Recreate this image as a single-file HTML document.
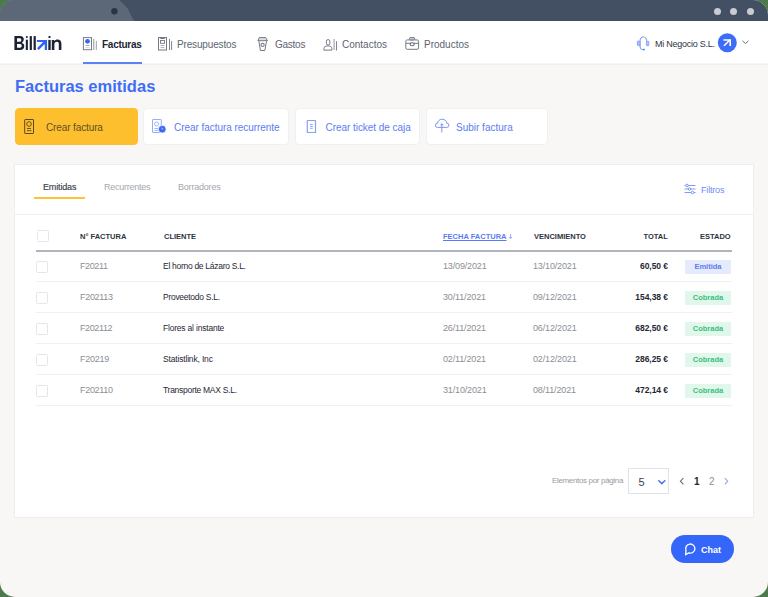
<!DOCTYPE html>
<html><head><meta charset="utf-8">
<style>
*{margin:0;padding:0;box-sizing:border-box}
html,body{width:768px;height:597px;overflow:hidden;background:#4b7a4b}
body{font-family:"Liberation Sans",sans-serif;color:#1f2735;position:relative}
.frame{position:absolute;left:0;top:0;width:768px;height:597px;border-radius:15px;overflow:hidden;background:#f8f7f5}
.abs{position:absolute;white-space:nowrap}
.topbar{position:absolute;left:0;top:0;width:768px;height:21px;background:#434f62}
.header{position:absolute;left:0;top:21px;width:768px;height:44px;background:#fff;border-bottom:1px solid #eef0f2;box-shadow:inset 0 -1px 0 #f5f6f8}
.nav{font-size:10px;color:#5d6471;line-height:12px}
.btn{position:absolute;top:108px;height:37px;background:#fff;border-radius:4px;border:1px solid #f0f0f2}
.btn span{position:absolute;top:12.5px;font-size:10px;line-height:12px;color:#5b7df4;white-space:nowrap}
.card{position:absolute;left:14px;top:164px;width:740px;height:354px;background:#fff;border:1px solid #eceef1}
.th{position:absolute;top:232px;font-size:7.5px;font-weight:bold;line-height:9px;color:#2d3440;white-space:nowrap}
.row{position:absolute;left:0;width:768px;height:31px}
.cb{position:absolute;left:36px;width:12px;height:12px;border:1px solid #e4e6e9;border-radius:1.5px;background:#fff}
.cell{position:absolute;top:11px;font-size:8.5px;line-height:10px;white-space:nowrap;color:#1f2735}
.cl{font-size:8.5px;top:11px}
.dg{font-size:9px;letter-spacing:-0.15px;top:10.5px}
.tot{right:100px;font-weight:bold;letter-spacing:-0.05px}
.gray{color:#8b8f96}
.sep{position:absolute;left:36px;top:31px;width:696px;height:1px;background:#eff0f2}
.badge{position:absolute;left:685px;top:10px;width:46px;height:14px;font-size:7.5px;line-height:14px;text-align:center;font-weight:bold}
.em{background:#e6eafd;color:#5b7cf2}
.co{background:#e2f7ec;color:#36c081}
</style></head>
<body>
<div class="frame">
  <div class="topbar"></div>
  <svg class="abs" style="left:0;top:0" width="140" height="21" viewBox="0 0 140 21"><path d="M0 0H119.2L121.3 2L123.3 4L125.4 6L127.3 8L128.5 10L129.5 12L130.4 14L131.3 16L132.3 18L133.3 19.6L134.6 21H0Z" fill="#5c6778"/><circle cx="114.4" cy="11.2" r="3.2" fill="#2a3445"/></svg>
  <div class="abs" style="left:713.5px;top:8.2px;width:7px;height:7px;border-radius:50%;background:#c9ccd1"></div>
  <div class="abs" style="left:730.2px;top:8.2px;width:7px;height:7px;border-radius:50%;background:#c9ccd1"></div>
  <div class="abs" style="left:747.2px;top:8.2px;width:7px;height:7px;border-radius:50%;background:#c9ccd1"></div>

  <div class="header"></div>
  <!-- logo -->
  <svg class="abs" style="left:0;top:0" width="70" height="60" viewBox="0 0 70 60">
    <path fill="#1c2433" fill-rule="evenodd" d="M14.4 36H20.2C22.6 36 23.8 37.3 23.8 39.2C23.8 40.6 23 41.6 21.9 42.9C23.4 43.2 24.3 44.4 24.3 46C24.3 48.4 22.8 50 20.2 50H14.4ZM17 38.3V41.8H19.9C21 41.8 21.3 41.1 21.3 40.05C21.3 39 20.9 38.3 19.9 38.3ZM17 44V47.7H20.1C21.3 47.7 21.7 47 21.7 45.85C21.7 44.7 21.2 44 20.1 44Z"/>
    <rect x="25.8" y="39.7" width="2.1" height="10.3" fill="#1c2433"/>
    <rect x="25.8" y="35.9" width="2.1" height="2.1" rx="1" fill="#1c2433"/>
    <rect x="29.7" y="36.1" width="2.2" height="13.9" fill="#1c2433"/>
    <rect x="33.6" y="36.1" width="2.2" height="13.9" fill="#1c2433"/>
    <path fill="#2f62f6" d="M36.9 39.9H47.05V50.05H44.7V43.9L38.7 49.9L37.05 48.25L43.1 42.1H36.9Z"/>
    <rect x="48.3" y="39.9" width="2.4" height="10.1" fill="#1c2433"/>
    <rect x="48.3" y="35.9" width="2.4" height="2.1" rx="1" fill="#1c2433"/>
    <path fill="#1c2433" d="M51.8 50V39.9H54.3V41.3C55 40.1 56.2 39.5 57.5 39.5C59.9 39.5 61.4 41 61.4 43.5V50H58.8V44C58.8 42.6 58.1 41.8 56.8 41.8C55.3 41.8 54.4 42.8 54.4 44.4V50Z"/>
  </svg>

  <!-- nav -->
  <div class="abs nav" style="left:102px;top:39px;font-weight:bold;color:#1f2735;letter-spacing:-0.27px">Facturas</div>
  <div class="abs" style="left:83px;top:62px;width:59px;height:2px;background:#5a82f5"></div>
  <div class="abs nav" style="left:177px;top:39px;letter-spacing:-0.15px">Presupuestos</div>
  <div class="abs nav" style="left:275px;top:39px;letter-spacing:-0.25px">Gastos</div>
  <div class="abs nav" style="left:342px;top:39px">Contactos</div>
  <div class="abs nav" style="left:424px;top:39px">Productos</div>
  <div class="abs nav" style="left:655px;top:37.5px;font-size:9px;color:#2f3642;letter-spacing:-0.25px">Mi Negocio S.L.</div>

  <!-- title -->
  <div class="abs" style="left:15px;top:77px;font-size:16.5px;font-weight:bold;line-height:19px;color:#3e6ef5">Facturas emitidas</div>

  <!-- buttons -->
  <div class="btn" style="left:15px;width:123px;background:#fdbf2d;border-color:#fdbf2d"><span style="left:30px;color:#5e5028;letter-spacing:-0.12px">Crear factura</span></div>
  <div class="btn" style="left:143px;width:146px"><span style="left:30px;letter-spacing:-0.05px">Crear factura recurrente</span></div>
  <div class="btn" style="left:295px;width:125px"><span style="left:29.5px;letter-spacing:-0.05px">Crear ticket de caja</span></div>
  <div class="btn" style="left:426px;width:122px"><span style="left:29px">Subir factura</span></div>

  <!-- card -->
  <div class="card"></div>
  <div class="abs" style="left:43px;top:181.5px;font-size:9px;line-height:10px;color:#3a404c;letter-spacing:-0.15px;-webkit-text-stroke:0.15px #3a404c">Emitidas</div>
  <div class="abs" style="left:104px;top:181.5px;font-size:9px;line-height:10px;color:#a3a7ae;letter-spacing:-0.25px">Recurrentes</div>
  <div class="abs" style="left:178px;top:181.5px;font-size:9px;line-height:10px;color:#a3a7ae;letter-spacing:-0.2px">Borradores</div>
  <div class="abs" style="left:34px;top:197px;width:51px;height:2px;background:#fbc23a"></div>
  <div class="abs" style="left:701px;top:184.5px;font-size:9px;line-height:10px;color:#6f8cf5;letter-spacing:-0.18px">Filtros</div>
  <div class="abs" style="left:15px;top:214px;width:738px;height:1px;background:#eeeff1"></div>

  <!-- table header -->
  <div class="cb" style="top:230px;left:37px"></div>
  <div class="th" style="left:80px">N° FACTURA</div>
  <div class="th" style="left:164px">CLIENTE</div>
  <div class="th" style="left:443px;color:#5a7cf3;text-decoration:underline">FECHA FACTURA</div>
  <div class="th" style="left:534px">VENCIMIENTO</div>
  <div class="th" style="left:643.5px">TOTAL</div>
  <div class="th" style="left:700px">ESTADO</div>
  <div class="abs" style="left:36px;top:250px;width:696px;height:2px;background:#b0b4bc"></div>

  <div class="row" style="top:250px">
    <div class="cb" style="top:11px"></div>
    <div class="cell gray dg" style="left:80px;letter-spacing:-0.39px">F20211</div>
    <div class="cell cl" style="left:163px;letter-spacing:-0.29px">El horno de Lázaro S.L.</div>
    <div class="cell gray dg" style="left:443px">13/09/2021</div>
    <div class="cell gray dg" style="left:533px">13/10/2021</div>
    <div class="cell tot">60,50 €</div>
    <div class="badge em">Emitida</div>
    <div class="sep"></div>
  </div>
  <div class="row" style="top:281px">
    <div class="cb" style="top:11px"></div>
    <div class="cell gray dg" style="left:80px;letter-spacing:-0.3px">F202113</div>
    <div class="cell cl" style="left:163px;letter-spacing:-0.28px">Proveetodo S.L.</div>
    <div class="cell gray dg" style="left:443px">30/11/2021</div>
    <div class="cell gray dg" style="left:533px">09/12/2021</div>
    <div class="cell tot">154,38 €</div>
    <div class="badge co">Cobrada</div>
    <div class="sep"></div>
  </div>
  <div class="row" style="top:312px">
    <div class="cb" style="top:11px"></div>
    <div class="cell gray dg" style="left:80px;letter-spacing:-0.38px">F202112</div>
    <div class="cell cl" style="left:163px;letter-spacing:-0.2px">Flores al instante</div>
    <div class="cell gray dg" style="left:443px">26/11/2021</div>
    <div class="cell gray dg" style="left:533px">06/12/2021</div>
    <div class="cell tot">682,50 €</div>
    <div class="badge co">Cobrada</div>
    <div class="sep"></div>
  </div>
  <div class="row" style="top:343px">
    <div class="cb" style="top:11px"></div>
    <div class="cell gray dg" style="left:80px;letter-spacing:-0.25px">F20219</div>
    <div class="cell cl" style="left:163px;letter-spacing:-0.17px">Statistlink, Inc</div>
    <div class="cell gray dg" style="left:443px">02/11/2021</div>
    <div class="cell gray dg" style="left:533px">02/12/2021</div>
    <div class="cell tot">286,25 €</div>
    <div class="badge co">Cobrada</div>
    <div class="sep"></div>
  </div>
  <div class="row" style="top:374px">
    <div class="cb" style="top:11px"></div>
    <div class="cell gray dg" style="left:80px;letter-spacing:-0.3px">F202110</div>
    <div class="cell cl" style="left:163px;letter-spacing:-0.28px">Transporte MAX S.L.</div>
    <div class="cell gray dg" style="left:443px">31/10/2021</div>
    <div class="cell gray dg" style="left:533px">08/11/2021</div>
    <div class="cell tot">472,14 €</div>
    <div class="badge co">Cobrada</div>
    <div class="sep"></div>
  </div>

  <!-- pagination -->
  <div class="abs" style="left:552px;top:475.5px;font-size:8px;line-height:10px;color:#979ba2;letter-spacing:-0.34px">Elementos por página</div>
  <div class="abs" style="left:628px;top:468px;width:41px;height:26px;border:1px solid #e0e2e6;background:#fff"></div>
  <div class="abs" style="left:638.5px;top:475.5px;font-size:11px;line-height:13px;color:#3a414e">5</div>
  <div class="abs" style="left:694px;top:476px;font-size:10px;line-height:11px;font-weight:bold;color:#1f2735">1</div>
  <div class="abs" style="left:709px;top:476px;font-size:10px;line-height:11px;color:#8b8f96">2</div>

  <!-- chat -->
  <div class="abs" style="left:671px;top:535px;width:63px;height:28px;border-radius:14px;background:#3566fa"></div>
  <div class="abs" style="left:701px;top:545px;font-size:9px;line-height:11px;font-weight:bold;color:#fff">Chat</div>

  <!-- icons overlay -->
  <svg class="abs" style="left:0;top:0" width="768" height="597" viewBox="0 0 768 597" fill="none">
    <!-- logo arrow -->
    <!-- facturas nav icon -->
    <rect x="83.4" y="37.6" width="8.1" height="12.1" stroke="#767d89" stroke-width="1"/>
    <circle cx="87.5" cy="41.3" r="2.4" fill="#3568f5"/>
    <path d="M85.5 45.5H89.5" stroke="#8a909a" stroke-width="0.8"/>
    <path d="M85.5 47.7H89.5" stroke="#c4c8ce" stroke-width="0.8"/>
    <path d="M93.7 39V50" stroke="#a9aeb6" stroke-width="1.3"/>
    <path d="M96.3 41V50" stroke="#9aa0a9" stroke-width="1"/>
    <!-- presupuestos -->
    <rect x="158.5" y="37.5" width="8" height="12.5" stroke="#727985" stroke-width="1"/>
    <path d="M160.5 37V38.5H164.5V37" stroke="#727985" stroke-width="1"/>
    <rect x="160.5" y="40.5" width="4" height="2.8" stroke="#727985" stroke-width="0.9"/>
    <path d="M160.5 45.5H164.5M160.5 47.6H164.5" stroke="#9aa0aa" stroke-width="0.8"/>
    <path d="M169.5 39V50M171.6 41V50" stroke="#7f8692" stroke-width="1"/>
    <!-- gastos cup -->
    <path d="M259.3 37.6H265.6L267.6 40.7H257.8Z" fill="#dcdfe3" stroke="#727985" stroke-width="1"/>
    <path d="M258.9 41.2L260.4 50.5H264.8L266.5 41.2" stroke="#727985" stroke-width="1"/>
    <circle cx="262.6" cy="44.9" r="1.6" stroke="#727985" stroke-width="1.1"/>
    <!-- contactos -->
    <rect x="326.4" y="39.6" width="3.5" height="5.4" rx="1.7" stroke="#727985" stroke-width="1"/>
    <path d="M323.9 50.1V48.4C323.9 46.9 325.5 45.9 327.9 45.9S331.9 46.9 331.9 48.4V50.1Z" stroke="#727985" stroke-width="1"/>
    <path d="M334.1 39V50" stroke="#a9aeb6" stroke-width="1.3"/>
    <path d="M336.5 41.2V50.5" stroke="#7f8692" stroke-width="1"/>
    <!-- productos -->
    <rect x="405.8" y="39.9" width="12.8" height="9.4" rx="1.5" stroke="#727985" stroke-width="1"/>
    <rect x="409.6" y="37.6" width="5" height="2.3" rx="0.6" fill="#d3d6db" stroke="#727985" stroke-width="1"/>
    <path d="M406 43.3H418.5" stroke="#727985" stroke-width="1"/>
    <ellipse cx="412.2" cy="44.2" rx="2.1" ry="1.5" fill="#fff" stroke="#666d79" stroke-width="1.1"/>
    <!-- headset -->
    <path d="M646.5 41.5V40.6C646.5 38.4 645.1 36.9 643.3 36.9C641.5 36.9 640.1 38.4 640.1 40.6V47C640.1 48.6 641.2 49.6 642.8 49.6H644.2" stroke="#6f8ff6" stroke-width="1"/>
    <rect x="637.4" y="41" width="2.4" height="4.5" rx="0.6" fill="#b3c3fa" stroke="#7a97f7" stroke-width="0.8"/>
    <rect x="646.4" y="41.2" width="2.4" height="4.5" rx="0.6" fill="#b3c3fa" stroke="#7a97f7" stroke-width="0.8"/>
    <ellipse cx="643.8" cy="49.6" rx="1.3" ry="0.8" fill="#5d82f6"/>
    <!-- arrow circle -->
    <circle cx="727.3" cy="42.8" r="9.5" fill="#3d6cf6"/>
    <g stroke="#fff" stroke-width="1.6"><path d="M723.4 40H730.2V46"/><path d="M724 45.8L729.6 40.3"/></g>
    <path d="M742.5 40.8L745.5 43.6L748.5 40.8" stroke="#6a707b" stroke-width="1"/>
    <!-- btn icons -->
    <rect x="24.7" y="119.5" width="8.8" height="14" rx="0.5" stroke="#5a4a1c" stroke-width="1"/>
    <circle cx="29" cy="124" r="2.3" stroke="#5a4a1c" stroke-width="0.9"/>
    <path d="M27 128.5H31M27 130.7H31.5" stroke="#5a4a1c" stroke-width="0.9"/>

    <rect x="152.5" y="119.5" width="8.8" height="13" rx="0.5" stroke="#97adf8" stroke-width="1"/>
    <circle cx="156.5" cy="124" r="2" stroke="#97adf8" stroke-width="0.9"/>
    <path d="M154.5 128.5H158.5M154.5 130.5H158" stroke="#97adf8" stroke-width="0.9"/>
    <circle cx="162.2" cy="129.2" r="3.9" fill="#3d68f5" stroke="#fff" stroke-width="0.8"/>
    <path d="M161.6 127.8L162.8 129.5" stroke="#fff" stroke-width="0.8"/>

    <rect x="307.3" y="120.5" width="8.2" height="12" rx="0.3" stroke="#86a0f7" stroke-width="1.2"/>
    <path d="M310 124.5H312.8M310 126.4H312.8M310 128.3H312.8" stroke="#86a0f7" stroke-width="0.9"/>

    <path d="M437.3 127.4A2.1 2.1 0 0 1 437.7 123.2A4.5 4.0 0 0 1 446.7 123.2A2.1 2.1 0 0 1 446.9 127.4Z" stroke="#7a95f6" stroke-width="1"/>
    <path d="M441.8 124.5V132.5" stroke="#7a95f6" stroke-width="1"/>
    <path d="M440 125.3L441.8 123.2L443.6 125.3Z" fill="#7a95f6"/>

    <!-- filtros -->
    <g stroke="#6f8ef5" stroke-width="0.9">
      <path d="M684.5 185.5H695.5M684.5 189H695.5M684.5 192.5H695.5"/>
    </g>
    <circle cx="687" cy="185.5" r="1.3" fill="#fff" stroke="#6f8ef5" stroke-width="0.9"/>
    <circle cx="689.5" cy="189" r="1.3" fill="#fff" stroke="#6f8ef5" stroke-width="0.9"/>
    <circle cx="692.5" cy="192.5" r="1.3" fill="#fff" stroke="#6f8ef5" stroke-width="0.9"/>

    <!-- sort arrow -->
    <path d="M510.6 234V238.3M509.3 237L510.6 238.5L511.9 237" stroke="#6f8ef5" stroke-width="0.7"/>

    <!-- select chevron -->
    <path d="M658.3 480.2L661.8 483.6L665.3 480.2" stroke="#4a76f6" stroke-width="1.5"/>
    <!-- pager chevrons -->
    <path d="M683.4 478.1L680.4 481.2L683.4 484.3" stroke="#6a707b" stroke-width="1.1"/>
    <path d="M724.9 478.1L727.7 481.2L724.9 484.3" stroke="#8fa6f5" stroke-width="1.1"/>

    <!-- chat icon -->
    <path d="M685.98 550.17A4.6 4.6 0 1 1 688.73 552.92L685.6 554.8Z" stroke="#fff" stroke-width="1.3" stroke-linejoin="round"/>
  </svg>
</div>
</body></html>
